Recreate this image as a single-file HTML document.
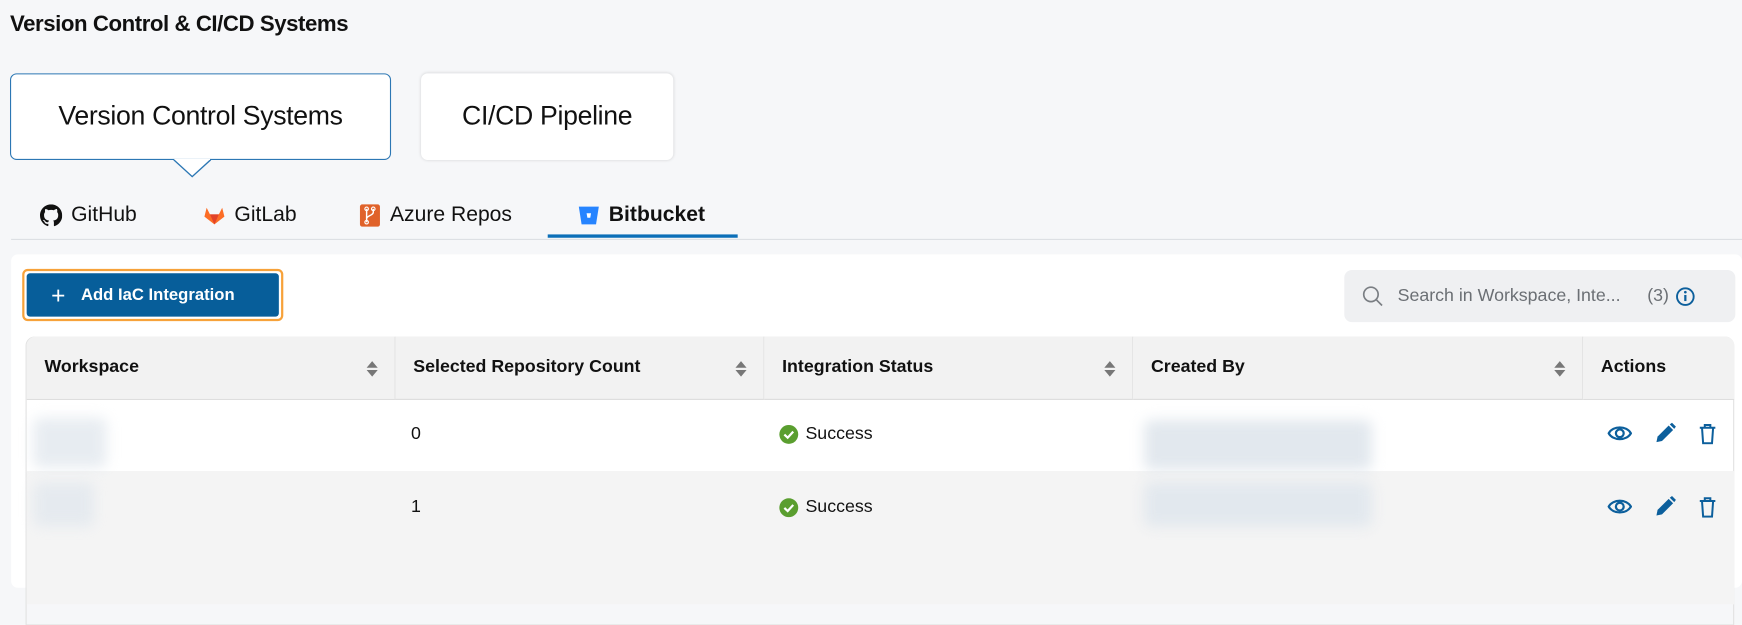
<!DOCTYPE html>
<html><head><meta charset="utf-8"><style>
*{box-sizing:border-box;margin:0;padding:0}
body{width:1742px;height:543px;overflow:hidden;background:#f6f7f9;font-family:"Liberation Sans",sans-serif;color:#111}
#w{position:absolute;left:0;top:0;width:1568px;height:489px;transform:scale(1.11097);transform-origin:0 0}
.a{position:absolute}
.title{left:9px;top:11px;font-size:20px;font-weight:bold;letter-spacing:-0.4px}
.box{background:#fff;border-radius:6px;font-size:24px;display:flex;align-items:center;justify-content:center;letter-spacing:-0.3px}
.tab{top:180px;font-size:19px;display:flex;align-items:center;gap:8px;height:28px}
.th{top:303px;height:57px;background:#f2f2f2;border-bottom:1px solid #ddd;font-size:16px;font-weight:bold;display:flex;align-items:center;padding-left:16px;border-right:1px solid #e4e4e4}
.sort{position:absolute;right:14px;top:20px;width:12px;height:18px}
.cell{font-size:16px;display:flex;align-items:center}
.blur{background:#e2e8ee;filter:blur(6px);border-radius:6px}
</style></head><body><div id="w">
<div class="a title">Version Control &amp; CI/CD Systems</div>
<div class="a box" style="left:9px;top:66px;width:343px;height:78px;border:1px solid #2c77b4">Version Control Systems</div>
<svg class="a" style="left:156px;top:143px" width="34" height="17"><path d="M0 0.5 L17 16 L34 0.5" fill="#fff" stroke="#2c77b4" stroke-width="1.2"/><rect x="1" y="-1" width="32" height="2" fill="#fff"/></svg>
<div class="a box" style="left:379px;top:66px;width:227px;height:78px;box-shadow:0 0 3px rgba(0,0,0,.15)">CI/CD Pipeline</div>

<div class="a tab" style="left:36px"><svg width="20" height="20" viewBox="0 0 16 16"><path fill="#111" d="M8 0C3.58 0 0 3.58 0 8c0 3.54 2.29 6.530 5.47 7.59.4.07.55-.17.55-.38v-1.33c-2.23.48-2.7-1.070-2.7-1.070-.36-.92-.89-1.170-.89-1.17-.73-.5.06-.49.06-.49.8.06 1.23.83 1.23.83.71 1.22 1.87.87 2.33.66.07-.52.28-.87.51-1.07-1.78-.2-3.64-.89-3.64-3.95 0-.87.31-1.59.82-2.15-.08-.2-.36-1.02.08-2.12 0 0 .67-.21 2.2.82a7.6 7.6 0 014 0c1.53-1.04 2.2-.82 2.2-.82.44 1.1.16 1.92.08 2.12.51.56.82 1.27.82 2.15 0 3.07-1.87 3.75-3.65 3.95.29.25.54.73.54 1.48v2.2c0 .21.15.46.55.38A8 8 0 0016 8c0-4.42-3.58-8-8-8z"/></svg>GitHub</div>
<div class="a tab" style="left:183px"><svg width="20" height="20" viewBox="0 0 20 20"><path d="M10 18 L1 11 L3 3 L6 9 H14 L17 3 L19 11Z" fill="#fc6d26"/><path d="M10 18 L6 9 H14Z" fill="#e24329"/></svg>GitLab</div>
<div class="a tab" style="left:323px"><svg width="20" height="22" viewBox="0 0 20 22"><rect x="1" y="1" width="18" height="20" rx="2" fill="#e0622a"/><path d="M7 5v12M13 5v3c0 3-6 3-6 6" stroke="#fff" stroke-width="1.3" fill="none"/><circle cx="7" cy="5" r="1.6" fill="none" stroke="#fff"/><circle cx="13" cy="5" r="1.6" fill="none" stroke="#fff"/><circle cx="7" cy="17" r="1.6" fill="none" stroke="#fff"/></svg>Azure Repos</div>
<div class="a tab" style="left:520px;font-weight:bold"><svg width="20" height="20" viewBox="0 0 20 20"><path d="M1 2 H19 L16.5 18 H3.5Z" fill="#2684ff"/><path d="M8 8 H12 L11.3 12 H8.7Z" fill="#fff"/></svg>Bitbucket</div>
<div class="a" style="left:10px;top:215px;width:1558px;height:1px;background:#dcdfe3"></div>
<div class="a" style="left:493px;top:211px;width:171px;height:3px;background:#0c6fb8"></div>

<div class="a" style="left:10px;top:229px;width:1558px;height:300px;background:#fff;border-radius:6px"></div>
<div class="a" style="left:20px;top:242px;width:235px;height:47px;border:2px solid #f7a23a;border-radius:5px;padding:2px"><div style="background:#075e9a;border-radius:3px;height:100%;color:#fff;font-weight:bold;font-size:15px;display:flex;align-items:center;padding-left:22px;gap:14px"><span style="font-weight:normal;font-size:22px;line-height:1">+</span>Add IaC Integration</div></div>
<div class="a" style="left:1210px;top:243px;width:352px;height:47px;background:#eff0f2;border-radius:7px;display:flex;align-items:center;font-size:16px;color:#6b6f74;padding-left:16px">
<svg width="20" height="20" viewBox="0 0 20 20"><circle cx="8" cy="8" r="6.5" fill="none" stroke="#7a7e83" stroke-width="1.5"/><path d="M13 13 L18 18" stroke="#7a7e83" stroke-width="1.5"/></svg>
<span style="margin-left:12px">Search in Workspace, Inte...</span><span style="margin-left:24px">(3)</span>
<svg style="margin-left:6px" width="18" height="18" viewBox="0 0 18 18"><circle cx="9" cy="9" r="7.5" fill="none" stroke="#0c5f9c" stroke-width="1.7"/><rect x="8" y="7.5" width="2" height="5.5" fill="#0c5f9c"/><circle cx="9" cy="5" r="1.2" fill="#0c5f9c"/></svg></div>

<div class="a" style="left:23px;top:303px;width:1538px;height:260px;border:1px solid #e2e2e2;border-radius:8px 8px 0 0"></div>
<div class="a th" style="left:24px;width:332px;border-top-left-radius:8px">Workspace<svg class="sort" viewBox="0 0 12 18"><path d="M6 2 L11 8 H1Z M6 16 L11 10 H1Z" fill="#777"/></svg></div>
<div class="a th" style="left:356px;width:332px">Selected Repository Count<svg class="sort" viewBox="0 0 12 18"><path d="M6 2 L11 8 H1Z M6 16 L11 10 H1Z" fill="#777"/></svg></div>
<div class="a th" style="left:688px;width:332px">Integration Status<svg class="sort" viewBox="0 0 12 18"><path d="M6 2 L11 8 H1Z M6 16 L11 10 H1Z" fill="#777"/></svg></div>
<div class="a th" style="left:1020px;width:405px">Created By<svg class="sort" viewBox="0 0 12 18"><path d="M6 2 L11 8 H1Z M6 16 L11 10 H1Z" fill="#777"/></svg></div>
<div class="a th" style="left:1425px;width:136px;border-right:none;border-top-right-radius:8px">Actions</div>

<div class="a" style="left:24px;top:424px;width:1537px;height:120px;background:#f4f4f4"></div>
<div class="a blur" style="left:30px;top:376px;width:66px;height:45px;opacity:.8"></div>
<div class="a blur" style="left:30px;top:434px;width:55px;height:40px;opacity:.8"></div>
<div class="a blur" style="left:1030px;top:378px;width:205px;height:45px"></div>
<div class="a blur" style="left:1030px;top:434px;width:205px;height:40px"></div>

<div class="a cell" style="left:370px;top:382px">0</div>
<div class="a cell" style="left:370px;top:448px">1</div>
<div class="a cell" style="left:701px;top:382px;gap:6px"><svg width="18" height="18"><circle cx="9" cy="9" r="8.5" fill="#5a9e2f"/><path d="M5 9.2 L8 12 L13 6.5" stroke="#fff" stroke-width="2" fill="none"/></svg>Success</div>
<div class="a cell" style="left:701px;top:448px;gap:6px"><svg width="18" height="18"><circle cx="9" cy="9" r="8.5" fill="#5a9e2f"/><path d="M5 9.2 L8 12 L13 6.5" stroke="#fff" stroke-width="2" fill="none"/></svg>Success</div>

<div class="a" style="left:1447px;top:380px;display:flex;gap:20px;align-items:center">
<svg width="22" height="18" viewBox="0 0 22 18"><path d="M1 9 C5 2 17 2 21 9 C17 16 5 16 1 9Z" fill="none" stroke="#0c5f9c" stroke-width="2"/><circle cx="11" cy="9" r="3.5" fill="none" stroke="#0c5f9c" stroke-width="2"/></svg>
<svg width="20" height="20" viewBox="0 0 20 20"><path d="M2 18 L3 13 L13 3 L17 7 L7 17Z" fill="#0c5f9c"/><path d="M14 2 L16 0.5 L19.5 4 L18 6Z" fill="#0c5f9c"/></svg>
<svg width="16" height="19" viewBox="0 0 16 19"><path d="M1 4 H15 M5.5 4 V1.5 H10.5 V4 M3 4 L4 18 H12 L13 4" fill="none" stroke="#0c5f9c" stroke-width="1.8"/></svg></div>
<div class="a" style="left:1447px;top:446px;display:flex;gap:20px;align-items:center">
<svg width="22" height="18" viewBox="0 0 22 18"><path d="M1 9 C5 2 17 2 21 9 C17 16 5 16 1 9Z" fill="none" stroke="#0c5f9c" stroke-width="2"/><circle cx="11" cy="9" r="3.5" fill="none" stroke="#0c5f9c" stroke-width="2"/></svg>
<svg width="20" height="20" viewBox="0 0 20 20"><path d="M2 18 L3 13 L13 3 L17 7 L7 17Z" fill="#0c5f9c"/><path d="M14 2 L16 0.5 L19.5 4 L18 6Z" fill="#0c5f9c"/></svg>
<svg width="16" height="19" viewBox="0 0 16 19"><path d="M1 4 H15 M5.5 4 V1.5 H10.5 V4 M3 4 L4 18 H12 L13 4" fill="none" stroke="#0c5f9c" stroke-width="1.8"/></svg></div>
</div></body></html>
